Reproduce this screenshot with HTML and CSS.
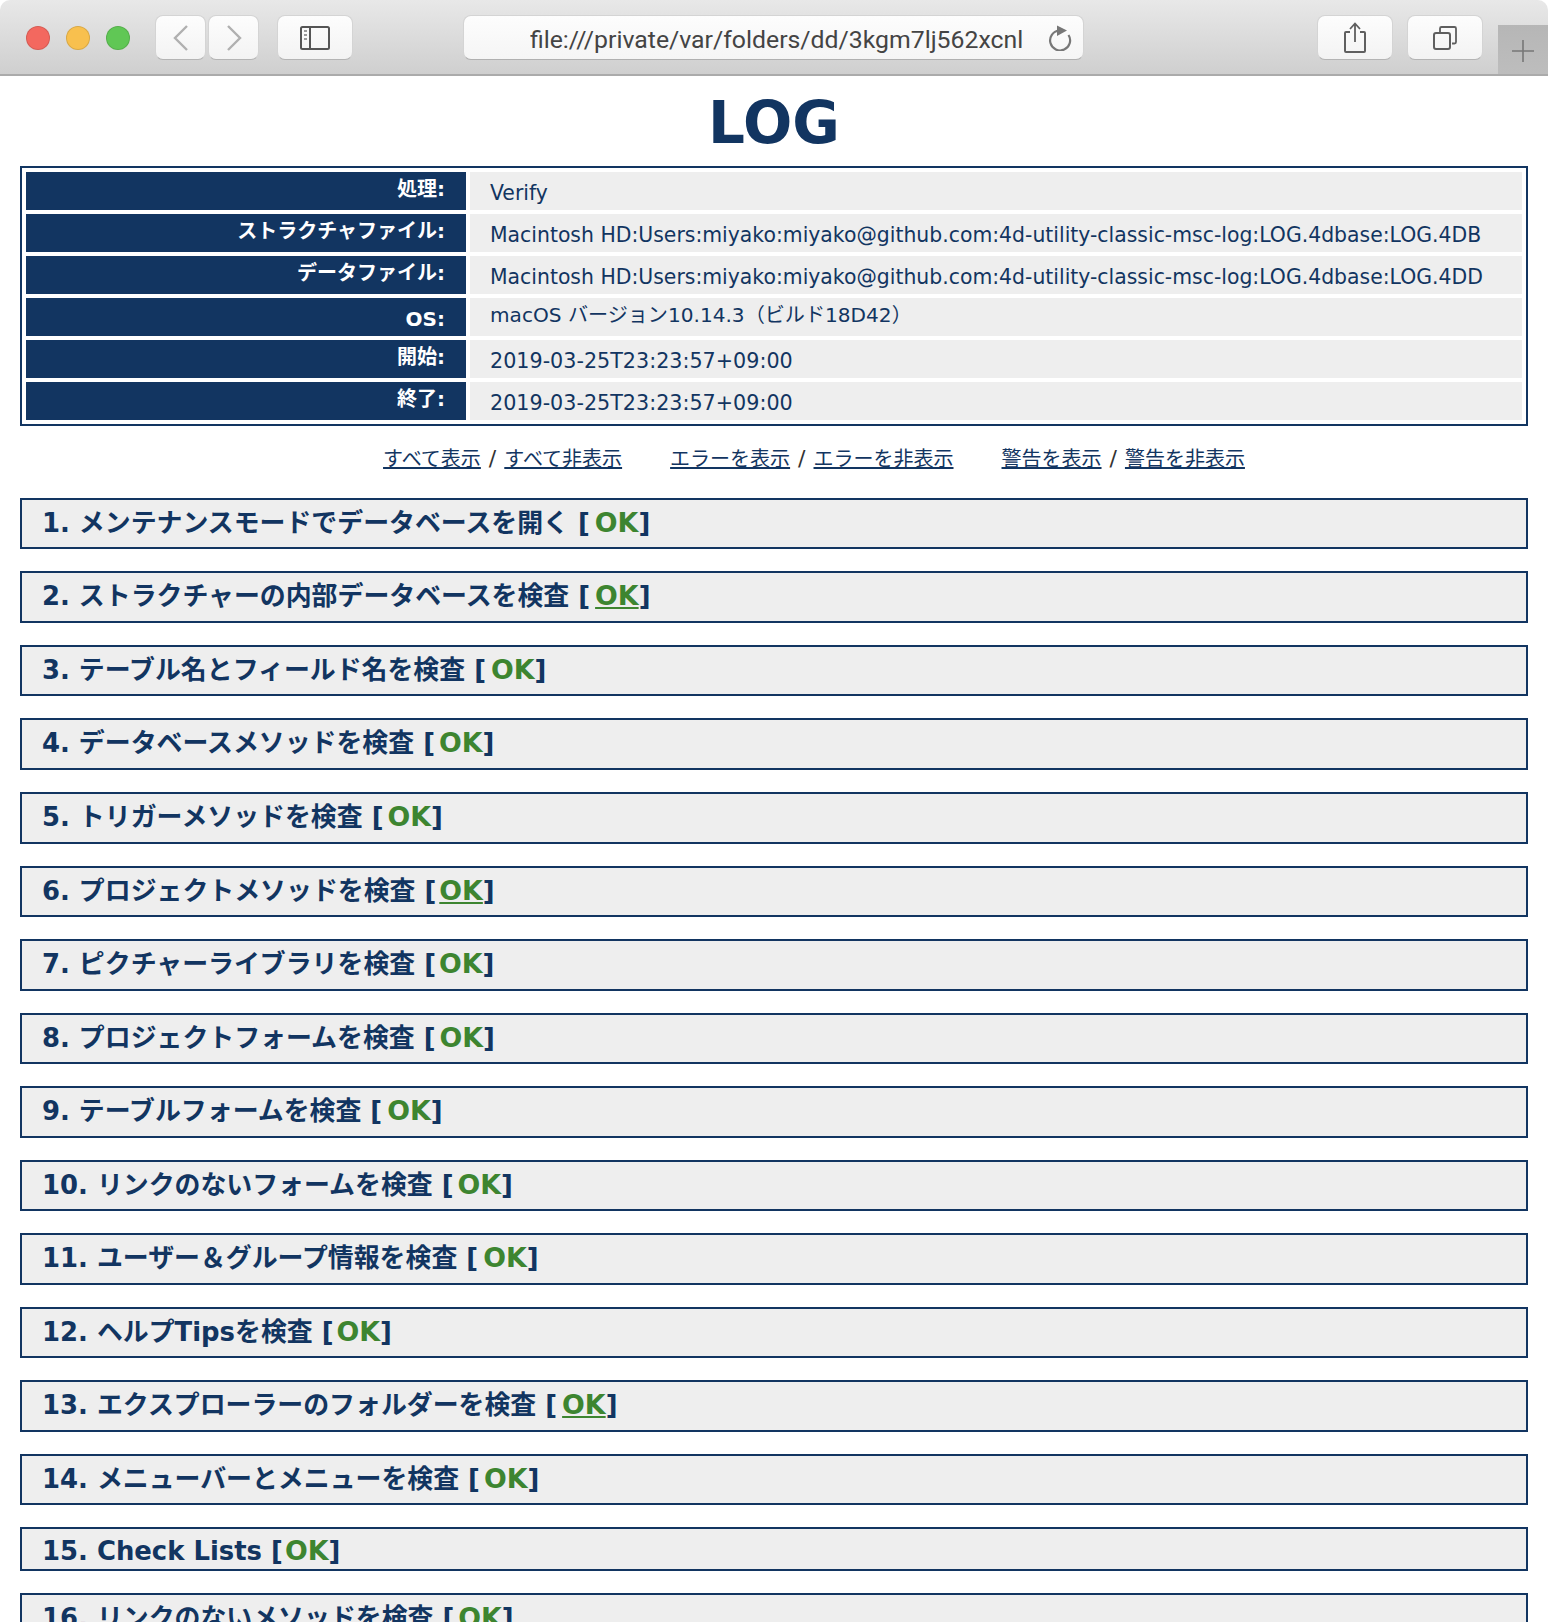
FILE: index.html
```html
<!DOCTYPE html>
<html lang="ja">
<head>
<meta charset="utf-8">
<title>LOG</title>
<link rel="stylesheet" href="styles.css">
</head>
<body>
<header class="toolbar">
  <div class="lights"><span class="light red"></span><span class="light yellow"></span><span class="light green"></span></div>
  <div class="navgroup">
    <button class="tbtn nav"><svg width="18" height="26" viewBox="0 0 18 26"><path d="M15 1 3 13l12 12" fill="none" stroke="#b0b0b0" stroke-width="2.4"/></svg></button>
    <button class="tbtn nav"><svg width="18" height="26" viewBox="0 0 18 26"><path d="M3 1l12 12L3 25" fill="none" stroke="#b0b0b0" stroke-width="2.4"/></svg></button>
  </div>
  <button class="tbtn wide sidebar"><svg width="30" height="24" viewBox="0 0 30 24"><rect x="1" y="1" width="28" height="22" rx="1.5" fill="none" stroke="#555" stroke-width="2"/><path d="M10 1v22" stroke="#555" stroke-width="2"/><path d="M4 5h3M4 9h3M4 13h3" stroke="#999" stroke-width="2"/></svg></button>
  <div class="urlbar">
    <span class="url">file:///private/var/folders/dd/3kgm7lj562xcnl</span>
    <svg class="reload" width="24" height="26" viewBox="0 0 24 26"><path d="M11 5.5A10 10 0 1 0 20.5 10" fill="none" stroke="#777" stroke-width="2.2"/><path d="M9 .5l10 5-10 5.5z" fill="#777"/></svg>
  </div>
  <button class="tbtn wide share"><svg width="24" height="32" viewBox="0 0 24 32"><path d="M7 10H3a1 1 0 0 0-1 1v18a1 1 0 0 0 1 1h18a1 1 0 0 0 1-1V11a1 1 0 0 0-1-1h-4" fill="none" stroke="#5f5f5f" stroke-width="2"/><path d="M12 20V1.5M7 7l5-5.5L17 7" fill="none" stroke="#5f5f5f" stroke-width="1.8"/></svg></button>
  <button class="tbtn wide tabs"><svg width="24" height="24" viewBox="0 0 24 24"><rect x="1" y="7" width="16" height="16" rx="2" fill="none" stroke="#5f5f5f" stroke-width="2"/><path d="M7 6V2.5A1.5 1.5 0 0 1 8.500 1h13A1.5 1.5 0 0 1 23 2.500V16a1.500 1.500 0 0 1-1.500 1.500H19" fill="none" stroke="#5f5f5f" stroke-width="1.8"/></svg></button>
  <div class="newtab"><svg width="22" height="22" viewBox="0 0 22 22"><path d="M11 0v22M0 11h22" stroke="#777" stroke-width="1.6"/></svg></div>
</header>

<main class="page">
  <h1 class="title">LOG</h1>
  <table class="info">
    <tr><th>処理:</th><td class="latin-val">Verify</td></tr>
    <tr><th>ストラクチャファイル:</th><td class="latin-val">Macintosh HD:Users:miyako:miyako@github.com:4d-utility-classic-msc-log:LOG.4dbase:LOG.4DB</td></tr>
    <tr><th>データファイル:</th><td class="latin-val">Macintosh HD:Users:miyako:miyako@github.com:4d-utility-classic-msc-log:LOG.4dbase:LOG.4DD</td></tr>
    <tr><th class="latin-head">OS:</th><td class="cjk-val">macOS バージョン10.14.3（ビルド18D42）</td></tr>
    <tr><th>開始:</th><td class="latin-val num">2019-03-25T23:23:57+09:00</td></tr>
    <tr><th>終了:</th><td class="latin-val num">2019-03-25T23:23:57+09:00</td></tr>
  </table>
  <nav class="filters">
    <span class="fgroup"><a href="#">すべて表示</a><span class="sep">/</span><a href="#">すべて非表示</a></span>
    <span class="fgroup"><a href="#">エラーを表示</a><span class="sep">/</span><a href="#">エラーを非表示</a></span>
    <span class="fgroup"><a href="#">警告を表示</a><span class="sep">/</span><a href="#">警告を非表示</a></span>
  </nav>
  <section class="steps">
    <h2 class="step">1. メンテナンスモードでデータベースを開く [<span class="ok gap-5">OK</span>]</h2>
    <h2 class="step">2. ストラクチャーの内部データベースを検査 [<a class="ok link gap-5" href="#">OK</a>]</h2>
    <h2 class="step">3. テーブル名とフィールド名を検査 [<span class="ok gap-5">OK</span>]</h2>
    <h2 class="step">4. データベースメソッドを検査 [<span class="ok gap-4">OK</span>]</h2>
    <h2 class="step">5. トリガーメソッドを検査 [<span class="ok gap-4">OK</span>]</h2>
    <h2 class="step">6. プロジェクトメソッドを検査 [<a class="ok link gap-3" href="#">OK</a>]</h2>
    <h2 class="step">7. ピクチャーライブラリを検査 [<span class="ok gap-3">OK</span>]</h2>
    <h2 class="step">8. プロジェクトフォームを検査 [<span class="ok gap-4">OK</span>]</h2>
    <h2 class="step">9. テーブルフォームを検査 [<span class="ok gap-5">OK</span>]</h2>
    <h2 class="step">10. リンクのないフォームを検査 [<span class="ok gap-4">OK</span>]</h2>
    <h2 class="step">11. ユーザー＆グループ情報を検査 [<span class="ok gap-5">OK</span>]</h2>
    <h2 class="step">12. ヘルプTipsを検査 [<span class="ok gap-3">OK</span>]</h2>
    <h2 class="step">13. エクスプローラーのフォルダーを検査 [<a class="ok link gap-5" href="#">OK</a>]</h2>
    <h2 class="step">14. メニューバーとメニューを検査 [<span class="ok gap-4">OK</span>]</h2>
    <h2 class="step latin">15. Check Lists [<span class="ok gap-2">OK</span>]</h2>
    <h2 class="step">16. リンクのないメソッドを検査 [<span class="ok gap-4">OK</span>]</h2>
  </section>
</main>
</body>
</html>
```
FILE: styles.css
```css
* { box-sizing: border-box; }
html, body { margin: 0; padding: 0; height: 1622px; overflow: hidden; background: #fff; }
body { font-family: "DejaVu Sans", Verdana, "Noto Sans CJK JP", sans-serif; color: #123561; }

.toolbar { position: relative; display: flex; align-items: flex-start; height: 76px; padding: 15px 0 0 26px; background: linear-gradient(#e8e8e8, #cfcfcf); border-bottom: 2px solid #ababab; border-radius: 10px 10px 0 0; }
.lights { display: flex; gap: 16px; margin-top: 11px; }
.light { width: 24px; height: 24px; border-radius: 50%; border: 1px solid rgba(0,0,0,.12); }
.red { background: #f3685f; }
.yellow { background: #f8c04e; }
.green { background: #60c755; }
.navgroup { display: flex; gap: 2px; margin-left: 25px; }
.tbtn { display: flex; align-items: center; justify-content: center; height: 45px; padding: 0; background: linear-gradient(#fdfdfd, #f3f3f3); border: 1px solid #d4d4d4; border-bottom-color: #b4b4b4; border-radius: 8px; }
.nav { width: 51px; }
.wide { width: 76px; }
.sidebar { margin-left: 18px; }
.urlbar { display: flex; align-items: center; width: 622px; height: 45px; margin-left: 110px; padding: 3px 0 0 66px; background: linear-gradient(#fdfdfd, #f5f5f5); border: 1px solid #d4d4d4; border-bottom-color: #b0b0b0; border-radius: 8px; }
.url { flex: none; width: 492px; overflow: hidden; white-space: nowrap; font: 24.8px Roboto, "Liberation Sans", sans-serif; color: #444; }
.reload { margin: -3px 0 0 26px; }
.share { margin-left: 233px; }
.tabs { margin-left: 14px; }
.newtab { display: flex; align-items: center; justify-content: center; width: 50px; height: 49px; margin: 10px 0 0 15px; padding-top: 3px; background: linear-gradient(#b6b6b6, #bdbdbd); }

.page { padding: 0 20px; }
.title { margin: 12px 0 0; text-align: center; font-size: 58px; line-height: 70px; font-weight: bold; }
.info { width: 100%; margin-top: 8px; border: 2px solid #123561; border-spacing: 4px; table-layout: fixed; }
.info th, .info td { height: 38px; overflow: hidden; white-space: nowrap; }
.info th { width: 440px; padding: 0 21px 8px; background: #123561; color: #fff; text-align: right; font-size: 20px; font-weight: bold; }
.info td { padding: 0 20px; background: #eee; font-size: 20.4px; }
.info .latin-head { padding: 4px 21px 0; }
.info .latin-val { padding-top: 4px; }
.info .cjk-val { padding-bottom: 8px; font-size: 20.1px; }
.info .num { font-size: 20.7px; }
.filters { display: flex; justify-content: center; gap: 48px; margin-top: 19px; padding-left: 80px; font-size: 20px; line-height: 28px; }
.filters a { color: #123561; }
.sep { margin: 0 8px; color: #333; font-size: 22px; }
.steps { margin-top: 24.9px; }
.step { height: 51.54px; margin: 0 0 22px; padding: 0 0 0 20px; border: 2px solid #123561; background: #eee; font-size: 25.9px; line-height: 46px; font-weight: bold; white-space: nowrap; }
.latin { height: 44px; line-height: 44px; }
.ok { color: #3d8530; font-size: 26.8px; }
.link { text-decoration: underline; }
.gap-2 { margin-left: 2px; }
.gap-3 { margin-left: 3px; }
.gap-4 { margin-left: 4px; }
.gap-5 { margin-left: 5px; }
```
